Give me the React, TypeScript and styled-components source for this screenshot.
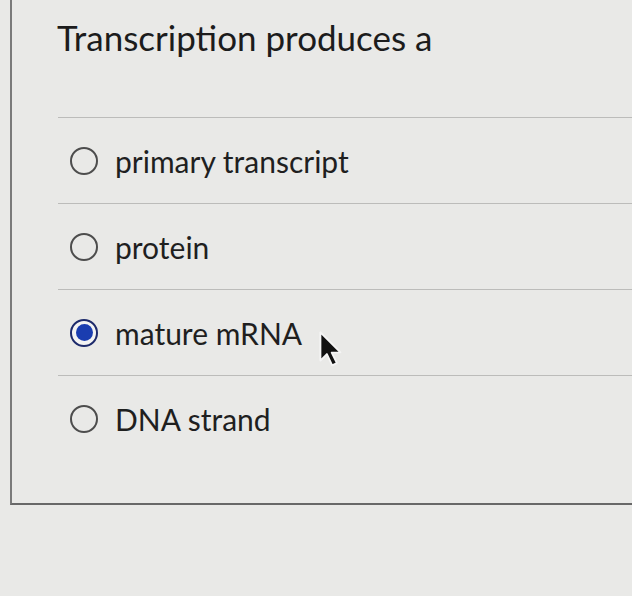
import React from "react";
import styled, { createGlobalStyle } from "styled-components";

const Global = createGlobalStyle`
  html, body { margin: 0; padding: 0; }
  body {
    background: #e9e9e7;
    font-family: Lato, "Open Sans", sans-serif;
    color: #1f1f1f;
    width: 632px;
    height: 596px;
    overflow: hidden;
  }
`;

const Page = styled.div`
  width: 632px;
  height: 596px;
  position: relative;
`;

const Card = styled.div`
  margin-left: 10px;
  height: 505px;
  border-left: 2px solid #7a7a7a;
  border-bottom: 2px solid #686868;
  box-sizing: border-box;
  padding: 17px 0 0 45px;
`;

const Title = styled.h1`
  margin: 0;
  font-family: Lato, sans-serif;
  font-weight: 400;
  font-size: 35px;
  line-height: 40px;
  color: #1c1c1c;
`;

const Options = styled.div`
  margin-top: 60px;
  margin-left: 1px;
  display: flex;
  flex-direction: column;
`;

const Row = styled.label`
  display: flex;
  align-items: center;
  gap: 17px;
  height: 86px;
  padding-left: 12px;
  box-sizing: border-box;
  border-top: 1.5px solid #bcbcba;
`;

const Radio = styled.span<{ $checked?: boolean }>`
  width: 28px;
  height: 28px;
  box-sizing: border-box;
  border-radius: 50%;
  border: 2px solid ${(p) => (p.$checked ? "#1d2a6b" : "#4d4d4d")};
  background: ${(p) => (p.$checked ? "#f3f3f3" : "transparent")};
  display: flex;
  align-items: center;
  justify-content: center;
  flex: none;
  &::after {
    content: "";
    display: ${(p) => (p.$checked ? "block" : "none")};
    width: 17px;
    height: 17px;
    border-radius: 50%;
    background: #1a3db0;
  }
`;

const OptionText = styled.span`
  font-family: Lato, sans-serif;
  font-size: 30px;
  color: #1f1f1f;
  line-height: 34px;
`;

const Cursor = styled.svg`
  position: absolute;
  left: 318px;
  top: 330px;
`;

const options = [
  { text: "primary transcript", checked: false },
  { text: "protein", checked: false },
  { text: "mature mRNA", checked: true },
  { text: "DNA strand", checked: false },
];

export default function App() {
  return (
    <Page>
      <Global />
      <Card>
        <Title>Transcription produces a</Title>
        <Options>
          {options.map((o) => (
            <Row key={o.text}>
              <Radio $checked={o.checked} />
              <OptionText>{o.text}</OptionText>
            </Row>
          ))}
        </Options>
      </Card>
      <Cursor width="26" height="40" viewBox="0 0 22 34">
        <path
          d="M2 2 L2 26 L7.5 20.5 L12 30 L16 28.2 L11.6 19.2 L19 19 Z"
          fill="#111"
          stroke="#f5f5f5"
          strokeWidth="1.6"
          strokeLinejoin="round"
        />
      </Cursor>
    </Page>
  );
}
